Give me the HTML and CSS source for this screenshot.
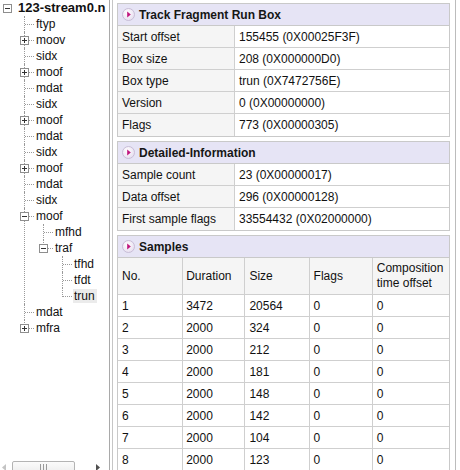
FILE: index.html
```html
<!DOCTYPE html>
<html>
<head>
<meta charset="utf-8">
<link rel="stylesheet" href="styles.css">
</head>
<body>
<div class="app">
  <div class="tree-pane">
    <div class="tree-body">
      <ul class="tree">
        <li class="root">
          <div class="row root-row"><svg class="box" width="9" height="9" viewBox="0 0 9 9"><rect x=".5" y=".5" width="8" height="8" fill="#fff" stroke="#8e8e8e"/><path d="M2 4.5h5" stroke="#333"/></svg><span class="label root-label">123-stream0.n</span></div>
          <ul class="children">
            <li><div class="row"><span class="spacer"></span><span class="label">ftyp</span></div></li>
            <li><div class="row"><svg class="box" width="9" height="9" viewBox="0 0 9 9"><rect x=".5" y=".5" width="8" height="8" fill="#fff" stroke="#8e8e8e"/><path d="M2 4.5h5M4.5 2v5" stroke="#333"/></svg><span class="label">moov</span></div></li>
            <li><div class="row"><span class="spacer"></span><span class="label">sidx</span></div></li>
            <li><div class="row"><svg class="box" width="9" height="9" viewBox="0 0 9 9"><rect x=".5" y=".5" width="8" height="8" fill="#fff" stroke="#8e8e8e"/><path d="M2 4.5h5M4.5 2v5" stroke="#333"/></svg><span class="label">moof</span></div></li>
            <li><div class="row"><span class="spacer"></span><span class="label">mdat</span></div></li>
            <li><div class="row"><span class="spacer"></span><span class="label">sidx</span></div></li>
            <li><div class="row"><svg class="box" width="9" height="9" viewBox="0 0 9 9"><rect x=".5" y=".5" width="8" height="8" fill="#fff" stroke="#8e8e8e"/><path d="M2 4.5h5M4.5 2v5" stroke="#333"/></svg><span class="label">moof</span></div></li>
            <li><div class="row"><span class="spacer"></span><span class="label">mdat</span></div></li>
            <li><div class="row"><span class="spacer"></span><span class="label">sidx</span></div></li>
            <li><div class="row"><svg class="box" width="9" height="9" viewBox="0 0 9 9"><rect x=".5" y=".5" width="8" height="8" fill="#fff" stroke="#8e8e8e"/><path d="M2 4.5h5M4.5 2v5" stroke="#333"/></svg><span class="label">moof</span></div></li>
            <li><div class="row"><span class="spacer"></span><span class="label">mdat</span></div></li>
            <li><div class="row"><span class="spacer"></span><span class="label">sidx</span></div></li>
            <li>
              <div class="row"><svg class="box" width="9" height="9" viewBox="0 0 9 9"><rect x=".5" y=".5" width="8" height="8" fill="#fff" stroke="#8e8e8e"/><path d="M2 4.5h5" stroke="#333"/></svg><span class="label">moof</span></div>
              <ul class="children nested">
                <li><div class="row"><span class="spacer"></span><span class="label">mfhd</span></div></li>
                <li>
                  <div class="row"><svg class="box" width="9" height="9" viewBox="0 0 9 9"><rect x=".5" y=".5" width="8" height="8" fill="#fff" stroke="#8e8e8e"/><path d="M2 4.5h5" stroke="#333"/></svg><span class="label">traf</span></div>
                  <ul class="children nested">
                    <li><div class="row"><span class="spacer"></span><span class="label">tfhd</span></div></li>
                    <li><div class="row"><span class="spacer"></span><span class="label">tfdt</span></div></li>
                    <li><div class="row"><span class="spacer"></span><span class="label selected">trun</span></div></li>
                  </ul>
                </li>
              </ul>
            </li>
            <li><div class="row"><span class="spacer"></span><span class="label">mdat</span></div></li>
            <li><div class="row"><svg class="box" width="9" height="9" viewBox="0 0 9 9"><rect x=".5" y=".5" width="8" height="8" fill="#fff" stroke="#8e8e8e"/><path d="M2 4.5h5M4.5 2v5" stroke="#333"/></svg><span class="label">mfra</span></div></li>
          </ul>
        </li>
      </ul>
    </div>
    <div class="hscroll">
      <svg class="arrow-left" width="4" height="7" viewBox="0 0 4 7"><path d="M4 0V7L0 3.5Z" fill="#c4c4c4"/></svg>
      <div class="thumb"><svg width="7" height="6" viewBox="0 0 7 6"><path d="M.5 0v6M3.5 0v6M6.5 0v6" stroke="#9a9a9a"/></svg></div>
      <svg class="arrow-right" width="4" height="7" viewBox="0 0 4 7"><path d="M0 0V7L4 3.5Z" fill="#505050"/></svg>
    </div>
  </div>

  <div class="detail-pane">
    <div class="detail-body">
      <div class="section">
        <div class="section-head"><svg class="head-icon" width="13" height="13" viewBox="0 0 13 13"><defs><radialGradient id="g1" cx="40%" cy="35%" r="70%"><stop offset="0" stop-color="#ffffff"/><stop offset="1" stop-color="#e6ddef"/></radialGradient></defs><circle cx="6.5" cy="6.5" r="6" fill="url(#g1)" stroke="#c7bdd6"/><path d="M5.2 3.6L8.8 6.5L5.2 9.4Z" fill="#c0157e"/></svg><span>Track Fragment Run Box</span></div>
        <table class="kv">
          <tr><td class="k">Start offset</td><td>155455 (0X00025F3F)</td></tr>
          <tr><td class="k">Box size</td><td>208 (0X000000D0)</td></tr>
          <tr><td class="k">Box type</td><td>trun (0X7472756E)</td></tr>
          <tr><td class="k">Version</td><td>0 (0X00000000)</td></tr>
          <tr><td class="k">Flags</td><td>773 (0X00000305)</td></tr>
        </table>
      </div>

      <div class="section">
        <div class="section-head"><svg class="head-icon" width="13" height="13" viewBox="0 0 13 13"><defs><radialGradient id="g2" cx="40%" cy="35%" r="70%"><stop offset="0" stop-color="#ffffff"/><stop offset="1" stop-color="#e6ddef"/></radialGradient></defs><circle cx="6.5" cy="6.5" r="6" fill="url(#g2)" stroke="#c7bdd6"/><path d="M5.2 3.6L8.8 6.5L5.2 9.4Z" fill="#c0157e"/></svg><span>Detailed-Information</span></div>
        <table class="kv">
          <tr><td class="k">Sample count</td><td>23 (0X00000017)</td></tr>
          <tr><td class="k">Data offset</td><td>296 (0X00000128)</td></tr>
          <tr><td class="k">First sample flags</td><td>33554432 (0X02000000)</td></tr>
        </table>
      </div>

      <div class="section">
        <div class="section-head"><svg class="head-icon" width="13" height="13" viewBox="0 0 13 13"><defs><radialGradient id="g3" cx="40%" cy="35%" r="70%"><stop offset="0" stop-color="#ffffff"/><stop offset="1" stop-color="#e6ddef"/></radialGradient></defs><circle cx="6.5" cy="6.5" r="6" fill="url(#g3)" stroke="#c7bdd6"/><path d="M5.2 3.6L8.8 6.5L5.2 9.4Z" fill="#c0157e"/></svg><span>Samples</span></div>
        <table class="samples">
          <tr class="hdr"><td class="c1">No.</td><td class="c2">Duration</td><td class="c3">Size</td><td class="c4">Flags</td><td class="c5">Composition time offset</td></tr>
          <tr><td>1</td><td>3472</td><td>20564</td><td>0</td><td>0</td></tr>
          <tr><td>2</td><td>2000</td><td>324</td><td>0</td><td>0</td></tr>
          <tr><td>3</td><td>2000</td><td>212</td><td>0</td><td>0</td></tr>
          <tr><td>4</td><td>2000</td><td>181</td><td>0</td><td>0</td></tr>
          <tr><td>5</td><td>2000</td><td>148</td><td>0</td><td>0</td></tr>
          <tr><td>6</td><td>2000</td><td>142</td><td>0</td><td>0</td></tr>
          <tr><td>7</td><td>2000</td><td>104</td><td>0</td><td>0</td></tr>
          <tr><td>8</td><td>2000</td><td>123</td><td>0</td><td>0</td></tr>
        </table>
      </div>
    </div>
    <div class="vscroll"></div>
  </div>
</div>
</body>
</html>
```

FILE: styles.css
```css
* { box-sizing: border-box; }

body {
  margin: 0;
  width: 460px;
  height: 470px;
  overflow: hidden;
  background: #fff;
  color: #111;
  font-family: "Liberation Sans", Arial, sans-serif;
  font-size: 12px;
}

.app {
  display: flex;
  height: 470px;
}

/* ---------- tree ---------- */
.tree-pane {
  width: 110px;
  flex: none;
  border-right: 1px solid #a9a9a9;
  display: flex;
  flex-direction: column;
  overflow: hidden;
}

.tree-body {
  flex: 1;
  overflow: hidden;
}

.tree, .tree ul {
  list-style: none;
  margin: 0;
  padding: 0;
}

.tree ul.nested {
  margin-left: 19px;
}

.tree li {
  position: relative;
}

.children > li::before {
  content: "";
  position: absolute;
  left: 24px;
  top: 0;
  bottom: 0;
  border-left: 1px dotted #9a9a9a;
}

.children > li:last-child::before {
  bottom: auto;
  height: 9px;
}

.children > li::after {
  content: "";
  position: absolute;
  left: 25px;
  top: 8px;
  width: 9px;
  border-top: 1px dotted #9a9a9a;
}

.row {
  height: 16px;
  display: flex;
  align-items: center;
  padding-left: 20px;
  white-space: nowrap;
  line-height: 16px;
}

.root-row {
  padding-left: 3px;
}

.box {
  flex: none;
  display: block;
  position: relative;
  z-index: 1;
}

.spacer {
  width: 9px;
  flex: none;
}

.label {
  margin-left: 7px;
  color: #111;
}

.root-label {
  margin-left: 6px;
  font-weight: bold;
  font-size: 13px;
}

.label.selected {
  margin-left: 6px;
  padding: 0 2px 0 1px;
  background: #ebebeb;
  line-height: 14px;
}

.hscroll {
  height: 14px;
  flex: none;
  display: flex;
  align-items: flex-start;
  padding-top: 5px;
  overflow: hidden;
}

.arrow-left {
  margin: 3px 0 0 2px;
  flex: none;
}

.thumb {
  width: 63px;
  height: 14px;
  margin-left: 6px;
  border: 1px solid #b4b4b4;
  border-radius: 2px;
  background: linear-gradient(#fbfbfb, #ececec);
  display: flex;
  justify-content: center;
  padding-top: 2px;
  flex: none;
}

.arrow-right {
  margin: 3px 9px 0 auto;
  flex: none;
}

/* ---------- detail ---------- */
.detail-pane {
  flex: 1;
  margin-left: 2px;
  border-left: 1px solid #c6c6c6;
  display: flex;
  overflow: hidden;
}

.detail-body {
  flex: 1;
  padding: 3px 5px 0 4px;
  overflow: hidden;
}

.vscroll {
  width: 5px;
  flex: none;
  border-left: 1px solid #bcbcbc;
}

.section {
  border: 1px solid #c9c9c9;
}

.section + .section {
  margin-top: 4px;
}

.section-head {
  height: 22px;
  background: #e6e4f5;
  border-bottom: 1px solid #c9c9c9;
  display: flex;
  align-items: center;
  gap: 4px;
  padding-left: 4px;
  font-weight: bold;
  color: #161616;
}

.head-icon {
  flex: none;
  display: block;
}

table {
  width: 100%;
  border-collapse: separate;
  border-spacing: 0;
  table-layout: fixed;
}

td {
  height: 22px;
  padding: 0 0 0 4px;
  border-bottom: 1px solid #cfcfcf;
  border-right: 1px solid #cfcfcf;
  vertical-align: middle;
  white-space: nowrap;
  color: #111;
}

td:last-child {
  border-right: none;
}

.kv tr:last-child td {
  border-bottom: none;
}

.kv td.k {
  width: 117px;
  background: #f5f5f5;
}

.samples .hdr td {
  height: 37px;
  background: #f5f5f5;
  white-space: normal;
  line-height: 15px;
}

.samples .c1 { width: 65px; }
.samples .c2 { width: 62px; }
.samples .c3 { width: 64px; }
.samples .c4 { width: 63px; }
.samples .c5 { width: 76px; }

.samples td:nth-child(2) {
  padding-left: 3px;
}
```
